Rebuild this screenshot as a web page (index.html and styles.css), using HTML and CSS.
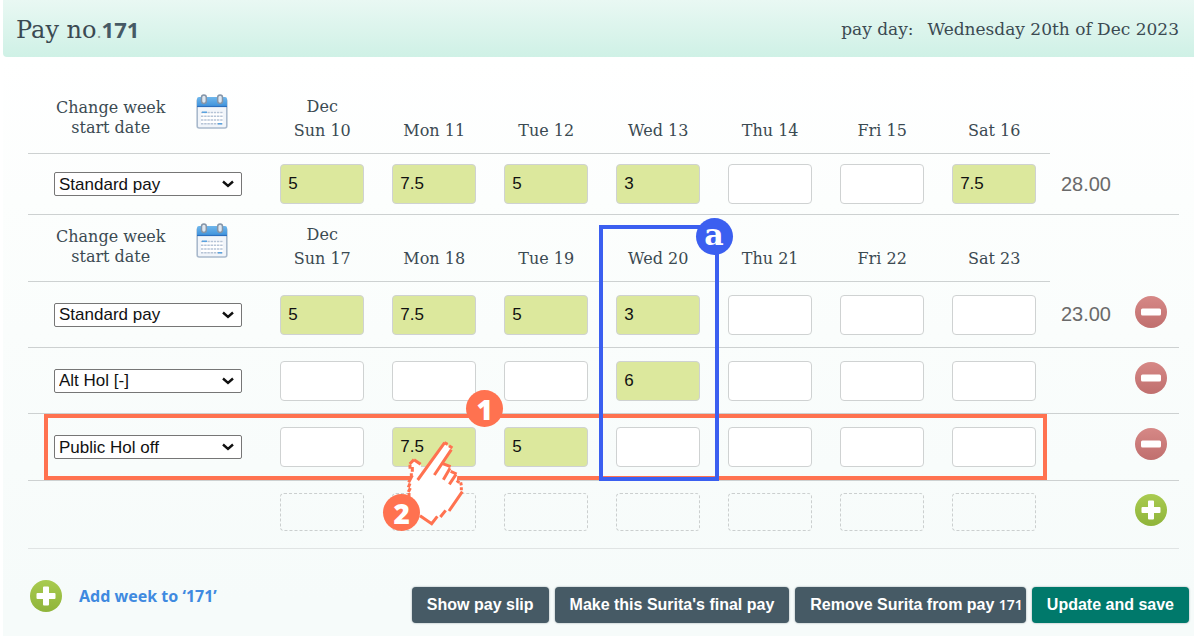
FILE: index.html
```html
<!DOCTYPE html>
<html lang="en">
<head>
<meta charset="utf-8">
<title>Pay no. 171</title>
<link rel="stylesheet" href="styles.css">
</head>
<body>
<svg class="symbols" aria-hidden="true">
  <defs>
    <linearGradient id="red" x1="0" y1="0" x2="0" y2="1"><stop offset="0" stop-color="#d68886"/><stop offset="1" stop-color="#c06f6e"/></linearGradient>
    <linearGradient id="green" x1="0" y1="0" x2="0" y2="1"><stop offset="0" stop-color="#a9cb50"/><stop offset="1" stop-color="#8fb43a"/></linearGradient>
    <linearGradient id="blue" x1="0" y1="0" x2="0" y2="1"><stop offset="0" stop-color="#6fb7ec"/><stop offset="1" stop-color="#3c90da"/></linearGradient>
    <symbol id="minus" viewBox="0 0 32 32">
      <circle cx="16" cy="16" r="16" fill="url(#red)"/>
      <rect x="6" y="12.500" width="20" height="7" rx="1.500" fill="#fff"/>
    </symbol>
    <symbol id="plus" viewBox="0 0 32 32">
      <circle cx="16" cy="16" r="16" fill="url(#green)"/>
      <path d="M14 6.500h4q1 0 1 1V13h5.500q1 0 1 1v4q0 1-1 1H19v5.500q0 1-1 1h-4q-1 0-1-1V19H7.500q-1 0-1-1v-4q0-1 1-1H13V7.500q0-1 1-1z" fill="#fff"/>
    </symbol>
    <symbol id="calendar" viewBox="0 0 32 36">
      <rect x="1.200" y="5" width="29.600" height="29" rx="2" fill="#f1f5fa" stroke="#a9b9cc" stroke-width="1.600"/>
      <path d="M1 13V5q0-2 2-2h26q2 0 2 2v8z" fill="url(#blue)"/>
      <path d="M1 12.500h30" stroke="#2c6fbe" stroke-width="1.200"/>
      <path d="M5 17.500h22v12H5z" fill="#fff"/>
      <path d="M5 18.500h22M5 22.300h22M5 26h22M5 29.700h22" stroke="#b6c4d6" stroke-width="1.400" stroke-dasharray="2.400 .8"/>
      <path d="M6 18.300h5M22 29.700h4" stroke="#5aa3e0" stroke-width="1.600"/>
      <rect x="5.500" y="1" width="4.800" height="8.500" rx="2.400" fill="#dfe7ef" stroke="#8595a8" stroke-width="1.500"/>
      <rect x="21.700" y="1" width="4.800" height="8.500" rx="2.400" fill="#dfe7ef" stroke="#8595a8" stroke-width="1.500"/>
    </symbol>
  </defs>
</svg>

<main class="page">
  <header class="title-bar">
    <h1 class="title">Pay no<span class="dot">.</span><span class="title-number">171</span></h1>
    <p class="pay-day"><span>pay day:</span><span>Wednesday 20th of Dec 2023</span></p>
  </header>

  <table class="sheet">
    <colgroup>
      <col class="col-type"><col class="col-day"><col class="col-day"><col class="col-day"><col class="col-day"><col class="col-day"><col class="col-day"><col class="col-day"><col class="col-total"><col>
    </colgroup>
    <tbody>
      <tr class="week-head first">
        <th><span class="change"><span>Change week<br>start date</span><button class="icon-button" aria-label="Change week start date"><svg class="calendar"><use href="#calendar"/></svg></button></span></th>
        <th>Dec<br>Sun 10</th><th>Mon 11</th><th>Tue 12</th><th>Wed 13</th><th>Thu 14</th><th>Fri 15</th><th>Sat 16</th>
        <td></td><td></td>
      </tr>
      <tr class="first-entry">
        <td class="type"><select aria-label="Pay type"><option>Standard pay</option></select></td>
        <td><input class="filled" aria-label="Sun 10" value="5"></td>
        <td><input class="filled" aria-label="Mon 11" value="7.5"></td>
        <td><input class="filled" aria-label="Tue 12" value="5"></td>
        <td><input class="filled" aria-label="Wed 13" value="3"></td>
        <td><input aria-label="Thu 14"></td>
        <td><input aria-label="Fri 15"></td>
        <td><input class="filled" aria-label="Sat 16" value="7.5"></td>
        <td class="total">28.00</td><td></td>
      </tr>
    </tbody>
    <tbody class="week-two">
      <tr class="week-head">
        <th><span class="change"><span>Change week<br>start date</span><button class="icon-button" aria-label="Change week start date"><svg class="calendar"><use href="#calendar"/></svg></button></span></th>
        <th>Dec<br>Sun 17</th><th>Mon 18</th><th>Tue 19</th><th>Wed 20</th><th>Thu 21</th><th>Fri 22</th><th>Sat 23</th>
        <td></td><td></td>
      </tr>
      <tr class="entry">
        <td class="type"><select aria-label="Pay type"><option>Standard pay</option></select></td>
        <td><input class="filled" aria-label="Sun 17" value="5"></td>
        <td><input class="filled" aria-label="Mon 18" value="7.5"></td>
        <td><input class="filled" aria-label="Tue 19" value="5"></td>
        <td><input class="filled" aria-label="Wed 20" value="3"></td>
        <td><input aria-label="Thu 21"></td>
        <td><input aria-label="Fri 22"></td>
        <td><input aria-label="Sat 23"></td>
        <td class="total">23.00</td>
        <td class="action"><button class="icon-button" aria-label="Remove row"><svg class="round"><use href="#minus"/></svg></button></td>
      </tr>
      <tr class="entry">
        <td class="type"><select aria-label="Pay type"><option>Alt Hol [-]</option></select></td>
        <td><input aria-label="Sun 17"></td>
        <td><input aria-label="Mon 18"></td>
        <td><input aria-label="Tue 19"></td>
        <td><input class="filled" aria-label="Wed 20" value="6"></td>
        <td><input aria-label="Thu 21"></td>
        <td><input aria-label="Fri 22"></td>
        <td><input aria-label="Sat 23"></td>
        <td></td>
        <td class="action"><button class="icon-button" aria-label="Remove row"><svg class="round"><use href="#minus"/></svg></button></td>
      </tr>
      <tr class="entry marked">
        <td class="type"><select aria-label="Pay type"><option>Public Hol off</option></select><span class="row-outline"></span></td>
        <td><input aria-label="Sun 17"></td>
        <td class="pointed"><input class="filled" aria-label="Mon 18" value="7.5">
          <span class="badge badge-one">1</span>
          <svg class="hand" viewBox="0 0 210 294" aria-hidden="true">
            <path d="M133 30L155 46 126 90 148 100 150 112 166 116 172 128 170 146 182 150 186 178 148 234 138 236 122 254 108 258 96 272 60 248 26 190 32 150 36 120 30 98 42 82 62 94 64 116 74 110z" fill="#fff"/>
            <g fill="none" stroke="#ff7250" stroke-width="9">
              <path d="M134 29L53 141M133 29l10 5M147 38l10 7M154 50L103 126M128 92l24 9M150 106L130 140M152 115l18 8M168 124L148 154M170 143l8 6M182 148l2 9M184 163v9M187 176L147 234M137 232L121 252M112 250L95 272L60 248"/>
              <path d="M42 80l20 14M42 80l-13 13M30 95v12M37 102v14M34 121v13M37 127l-11 21M30 151l-5 12M31 165l-6 12M27 180v12"/>
            </g>
          </svg>
          <span class="badge badge-two">2</span>
        </td>
        <td><input class="filled" aria-label="Tue 19" value="5"></td>
        <td><input aria-label="Wed 20"></td>
        <td><input aria-label="Thu 21"></td>
        <td><input aria-label="Fri 22"></td>
        <td><input aria-label="Sat 23"></td>
        <td><span class="column-outline"><span class="badge badge-a">a</span></span></td>
        <td class="action"><button class="icon-button" aria-label="Remove row"><svg class="round"><use href="#minus"/></svg></button></td>
      </tr>
    </tbody>
    <tbody>
      <tr class="new-entry">
        <td></td>
        <td><input aria-label="Sun 17"></td>
        <td><input aria-label="Mon 18"></td>
        <td><input aria-label="Tue 19"></td>
        <td><input aria-label="Wed 20"></td>
        <td><input aria-label="Thu 21"></td>
        <td><input aria-label="Fri 22"></td>
        <td><input aria-label="Sat 23"></td>
        <td></td>
        <td class="action"><button class="icon-button" aria-label="Add row"><svg class="round"><use href="#plus"/></svg></button></td>
      </tr>
    </tbody>
  </table>

  <footer class="footer">
    <a class="add-week" href="#"><svg class="round"><use href="#plus"/></svg><span>Add week to ‘171’</span></a>
    <div class="buttons">
      <button class="button">Show pay slip</button>
      <button class="button">Make this Surita's final pay</button>
      <button class="button remove">Remove Surita from pay <span class="small-number">171</span></button>
      <button class="button save">Update and save</button>
    </div>
  </footer>
</main>
</body>
</html>
```

FILE: styles.css
```css
* { box-sizing: border-box; }

body {
  margin: 0;
  background: #fff;
  color: #3b4a52;
  font-family: "DejaVu Serif", serif;
  font-size: 16px;
}

.symbols { position: absolute; width: 0; height: 0; }

.page {
  margin-left: 3px;
  min-height: 100vh;
  background: linear-gradient(#fff 60px, #fcfefd 200px, #f6fbfa 600px);
}

.title-bar {
  display: flex;
  justify-content: space-between;
  align-items: center;
  height: 57px;
  padding: 0 15px 0 13px;
  border-radius: 0 0 0 4px;
  background: linear-gradient(#e9f8f3, #cff1e6);
}
.title { margin: 0; padding-top: 6px; font-size: 24px; font-weight: 400; line-height: 32px; }
.dot { font-size: 16px; color: #8a9a98; }
.title-number { font: 700 22px/24px "Noto Sans", sans-serif; color: #465a65; }
.pay-day { display: flex; gap: 14px; margin: 0; font-size: 17px; }

.sheet {
  width: calc(100% - 40px);
  margin: 0 15px 0 25px;
  table-layout: fixed;
  border-collapse: separate;
  border-spacing: 0;
}
.col-type { width: 20.7%; }
.col-day { width: 9.73%; }
.col-total { width: 7%; }

.sheet th, .sheet td {
  padding: 0;
  text-align: center;
  border-bottom: 1px solid #cdd1d1;
}
.sheet .week-head td { border-bottom: 0; }
.sheet .week-head th {
  height: 67px;
  padding-bottom: 10px;
  vertical-align: bottom;
  font-weight: 400;
  line-height: 24px;
}
.sheet .first th { height: 97px; }
.change {
  display: flex;
  align-items: flex-start;
  gap: 30px;
  padding: 0 0 4px 28px;
  line-height: 20px;
}
.first .change { padding-bottom: 5px; }
.icon-button { display: inline-block; padding: 0; border: 0; background: none; }
.calendar { display: block; width: 32px; height: 36px; }
.change .icon-button { margin-top: -4px; }
.round { display: block; width: 32px; height: 32px; }

.first-entry td { height: 61px; }
.entry td { height: 66px; }
.marked td { height: 67px; }
.sheet .type { padding-left: 26px; text-align: left; }

select {
  width: 188px;
  height: 24px;
  padding: 0 4px;
  appearance: none;
  border: 1px solid #767676;
  border-radius: 2px;
  background: #fff url("data:image/svg+xml,%3Csvg xmlns='http://www.w3.org/2000/svg' viewBox='0 0 12 8'%3E%3Cpath d='M1 1.500l5 4.500 5-4.500' fill='none' stroke='%23111' stroke-width='2.400'/%3E%3C/svg%3E") no-repeat right 7px center / 12px 8px;
  color: #111;
  font: 17px "Liberation Sans", Arial, sans-serif;
}
input {
  display: inline-block;
  width: 75%;
  height: 40px;
  padding: 0 7px;
  vertical-align: middle;
  border: 1px solid #cfd2d2;
  border-radius: 4px;
  background: #fff;
  color: #111;
  font: 17px "Liberation Sans", Arial, sans-serif;
}
.filled { background: #dce89d; }
.sheet .total {
  padding-right: 9px;
  color: #6a6a6a;
  font: 20px "Liberation Sans", Arial, sans-serif;
}
.sheet .action { padding: 0 12px 2px 0; text-align: right; }

.sheet .new-entry td { height: 68px; padding-bottom: 6px; border-color: #e0e4e4; }
.new-entry input { height: 38px; border: 1px dashed #cbcfcf; background: transparent; }

/* Tutorial marks laid over the sheet */
.week-two, .marked .type, .pointed { position: relative; }
.row-outline {
  position: absolute;
  top: 0;
  bottom: 0;
  left: 16px;
  width: 421%;
  border: 4px solid #ff7250;
  pointer-events: none;
}
.column-outline {
  position: absolute;
  top: 10px;
  bottom: 0;
  left: 49.600%;
  width: 10.400%;
  border: 4px solid #3b5ff0;
  pointer-events: none;
}
.badge {
  position: absolute;
  display: flex;
  align-items: center;
  justify-content: center;
  width: 37px;
  height: 37px;
  border-radius: 50%;
  background: #ff7250;
  color: #fff;
  font: 800 28px/36px "Open Sans", "Noto Sans", sans-serif;
}
.badge-one { top: -24px; left: 88px; }
.badge-two { top: 80px; left: 5px; }
.badge-a {
  top: -11px;
  right: -18px;
  padding-bottom: 4px;
  background: #3b5ff0;
  font: 700 30px/30px "DejaVu Serif", serif;
}
.hand { position: absolute; top: 19px; left: 22px; width: 70px; height: 98px; pointer-events: none; }

.footer {
  display: flex;
  justify-content: space-between;
  align-items: flex-start;
  padding: 31px 5px 13px 27px;
}
.add-week {
  display: flex;
  align-items: center;
  gap: 17px;
  color: #3f8ae0;
  font: 700 16px "Noto Sans", sans-serif;
  text-decoration: none;
}
.buttons { display: flex; align-items: stretch; gap: 6px; padding-top: 7px; }
.button {
  height: 36px;
  padding: 0 15px;
  border: 0;
  border-radius: 4px;
  background: #465a65;
  box-shadow: 0 0 2px #8d9a9f;
  color: #fff;
  font: 700 16px/20px "Liberation Sans", Arial, sans-serif;
  white-space: nowrap;
}
.remove { padding-right: 3px; }
.small-number { font: 600 14px/14px "Noto Sans", sans-serif; }
.save { background: #00796b; }
```
